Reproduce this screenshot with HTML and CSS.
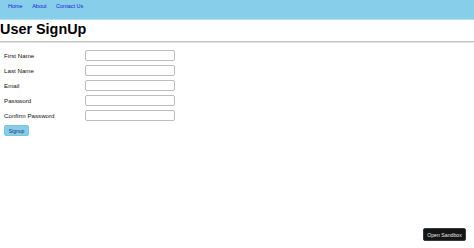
FILE: index.html
```html
<!DOCTYPE html>
<html lang="en">
<head>
  <meta charset="UTF-8" />
  <title>User SignUp</title>
  <link rel="stylesheet" href="styles.css">
</head>
<body>
  <nav class="topnav">
    <a href="#">Home</a>
    <a href="#">About</a>
    <a href="#">Contact Us</a>
  </nav>

  <h1 class="page-title">User SignUp</h1>

  <form class="signup-form">
    <div class="form-grid">
      <label for="firstName">First Name</label>
      <input type="text" id="firstName">
      <label for="lastName">Last Name</label>
      <input type="text" id="lastName">
      <label for="email">Email</label>
      <input type="email" id="email">
      <label for="password">Password</label>
      <input type="password" id="password">
      <label for="confirmPassword">Confirm Password</label>
      <input type="password" id="confirmPassword">
    </div>
    <button type="button" class="signup-btn">Signup</button>
  </form>

  <button class="sandbox-btn">Open Sandbox</button>
</body>
</html>
```

FILE: styles.css
```css
* {
  box-sizing: border-box;
}
html, body {
  margin: 0;
  padding: 0;
  height: 100%;
  background: white;
  color: black;
  font-family: "Liberation Sans", Arial, sans-serif;
}
.topnav {
  height: 20px;
  background-color: #87ceeb;
  border-bottom: 1px solid #b5e3f4;
  display: flex;
  align-items: flex-start;
  gap: 9.5px;
  padding: 3px 8px 0;
  font-size: 5.5px;
}
.topnav a {
  color: #1a1ad6;
  text-decoration: none;
  line-height: 7px;
}
.page-title {
  margin: 0;
  padding: 1px 0 4px;
  font-size: 14.4px;
  font-weight: bold;
  line-height: 16px;
  border-bottom: 1px solid #c4c4c4;
  box-shadow: 0 1px 0 #e4e4e4;
}
.signup-form {
  padding: 8px 4px 0;
}
.form-grid {
  display: grid;
  grid-template-columns: 81px 90px;
  grid-auto-rows: 11px;
  row-gap: 4px;
  align-items: center;
}
.form-grid label {
  font-size: 6.2px;
  color: #111;
}
.form-grid input {
  width: 90px;
  height: 11px;
  margin: 0;
  padding: 0 2px;
  border: 1px solid #bdbdbd;
  border-radius: 2px;
  background: white;
  font-size: 6px;
}
.signup-btn {
  display: block;
  margin-top: 4px;
  width: 25px;
  height: 11px;
  padding: 0;
  border: 1px solid #7cc3df;
  border-radius: 2px;
  background-color: #87ceeb;
  color: #14306b;
  font-size: 5px;
  font-family: inherit;
}
.sandbox-btn { /* floating button in the corner */
  position: absolute;
  right: 8px;
  bottom: 7px;
  width: 43px;
  height: 13px;
  padding: 0;
  border: 1px solid #3a3a3a;
  border-radius: 2px;
  background-color: #151515;
  color: #e8e8e8;
  font-size: 5.2px;
  font-family: inherit;
}
```
